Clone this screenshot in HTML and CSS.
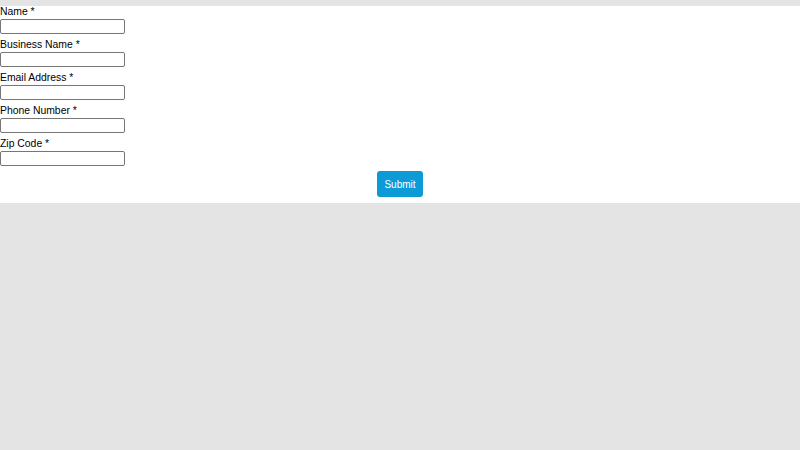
FILE: index.html
```html
<!DOCTYPE html>
<html>
<head>
<meta charset="utf-8">
<link rel="stylesheet" href="styles.css">
</head>
<body>
<form class="form">
  <div class="field"><label class="label">Name *</label><input class="input" type="text"></div>
  <div class="field"><label class="label">Business Name *</label><input class="input" type="text"></div>
  <div class="field"><label class="label">Email Address *</label><input class="input" type="text"></div>
  <div class="field"><label class="label">Phone Number *</label><input class="input" type="text"></div>
  <div class="field"><label class="label">Zip Code *</label><input class="input" type="text"></div>
  <div class="actions"><button class="submit" type="button">Submit</button></div>
</form>
</body>
</html>
```
FILE: styles.css
```css
html, body {
  margin: 0;
  padding: 0;
  background: #e4e4e4;
  font-family: "Liberation Sans", Arial, sans-serif;
}
body {
  padding-top: 6px;
}
.form {
  background: #ffffff;
  padding-bottom: 6px;
  margin: 0;
}
.field {
  display: flex;
  flex-direction: column;
  align-items: flex-start;
  margin-bottom: 5px;
}
.label {
  display: block;
  font-size: 10.4px;
  line-height: 10px;
  height: 10px;
  padding-top: 1px;
  padding-bottom: 2px;
  color: #000;
}
.input {
  box-sizing: border-box;
  width: 125px;
  height: 15px;
  margin: 0;
  padding: 0 2px;
  border: 1px solid #767676;
  border-radius: 2px;
  background: #fff;
  font-size: 10px;
}
.actions {
  display: flex;
  justify-content: center;
}
.submit {
  box-sizing: border-box;
  width: 46px;
  height: 26px;
  padding: 0;
  border: none;
  border-radius: 3px;
  background: #0c9bd7;
  color: #ffffff;
  font-family: "Liberation Sans", Arial, sans-serif;
  font-size: 10px;
}
```
